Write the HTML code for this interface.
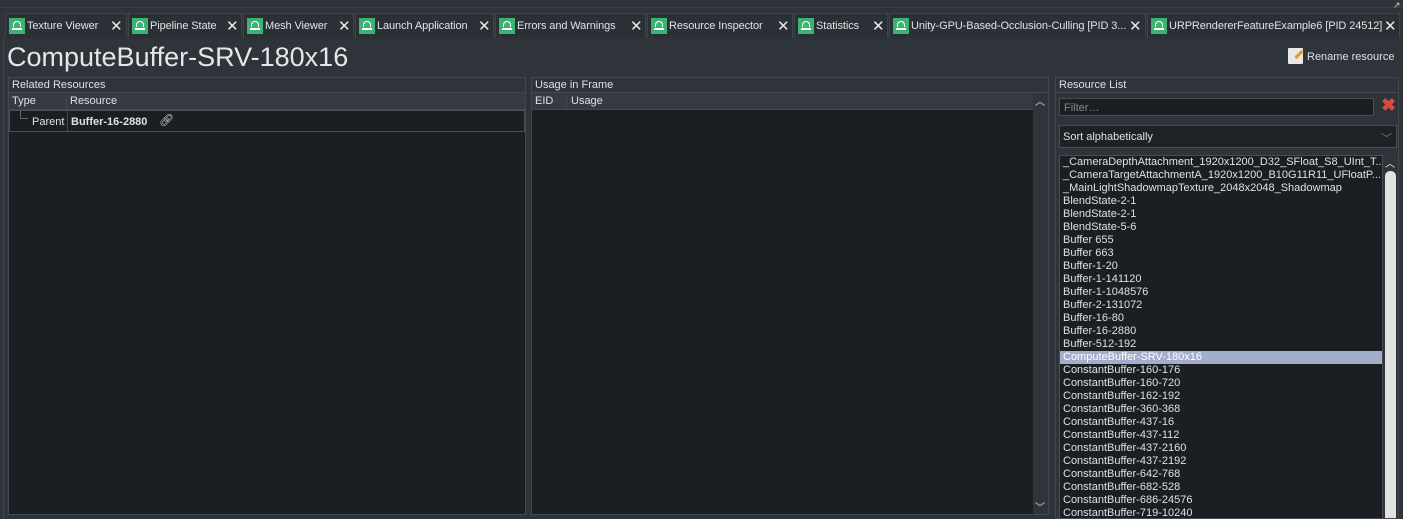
<!DOCTYPE html>
<html><head><meta charset="utf-8"><style>
*{margin:0;padding:0;box-sizing:border-box}
html,body{width:1403px;height:519px;overflow:hidden}
body{background:#2e3439;font-family:"Liberation Sans",sans-serif;font-size:11px;color:#dde1e4;position:relative}
.abs{position:absolute}
.tab{position:absolute;top:13px;height:25px;background:#2a3035;border:1px solid #3d444a;border-bottom:none;white-space:nowrap;overflow:hidden}
.tab .ic{position:absolute;left:3px;top:4px;width:16px;height:16px;background:#3cb371}
.tab .ic:after{content:"";position:absolute;left:4px;top:3px;width:6px;height:5px;border:1.5px solid #fff;border-radius:4px 4px 0 0;border-bottom:none}
.tab .ic:before{content:"";position:absolute;left:3px;top:10px;width:10px;height:1.5px;background:#fff}
.tab .t{position:absolute;left:21px;top:6px;font-size:11px;color:#dfe3e6;letter-spacing:-0.1px}
.tab .x{position:absolute;top:3px;font-size:15px;color:#e8e8e8;background:#2a3035}
.panel{position:absolute;top:77px;bottom:4px;border:1px solid #41484e;background:#1b1f23;overflow:hidden}
.ph{height:15px;background:#2e3439;padding-left:3px;line-height:14px;border-bottom:1px solid #41484e}
.ch{height:17px;background:#353b41;line-height:16px;position:relative;border-bottom:1px solid #41484e}
.row{height:13px;line-height:13px;padding-left:3px;white-space:nowrap;overflow:hidden}
</style></head><body>
<div class="abs" style="left:0;top:0;width:1403px;height:8px;border-bottom:1px solid #3a4147"></div>
<div class="abs" style="left:1393px;top:0;color:#ccc;font-size:9px">↗</div>

<div class="tab" style="left:5px;width:122px"><div class="ic"></div><div class="t">Texture Viewer</div><div class="x" style="left:104px">✕</div></div>
<div class="tab" style="left:128px;width:114px"><div class="ic"></div><div class="t">Pipeline State</div><div class="x" style="left:97px">✕</div></div>
<div class="tab" style="left:243px;width:111px"><div class="ic"></div><div class="t">Mesh Viewer</div><div class="x" style="left:94px">✕</div></div>
<div class="tab" style="left:355px;width:139px"><div class="ic"></div><div class="t">Launch Application</div><div class="x" style="left:122px">✕</div></div>
<div class="tab" style="left:495px;width:151px"><div class="ic"></div><div class="t">Errors and Warnings</div><div class="x" style="left:134px">✕</div></div>
<div class="tab" style="left:647px;width:146px"><div class="ic"></div><div class="t">Resource Inspector</div><div class="x" style="left:129px">✕</div></div>
<div class="tab" style="left:794px;width:94px"><div class="ic"></div><div class="t">Statistics</div><div class="x" style="left:77px">✕</div></div>
<div class="tab" style="left:889px;width:257px"><div class="ic"></div><div class="t">Unity-GPU-Based-Occlusion-Culling [PID 3...</div><div class="x" style="left:239px">✕</div></div>
<div class="tab" style="left:1147px;width:253px"><div class="ic"></div><div class="t">URPRendererFeatureExample6 [PID 24512]</div><div class="x" style="left:236px">✕</div></div>

<div class="abs" style="left:3px;top:38px;width:1400px;height:481px;background:#2e3439;border-left:1px solid #3d444a"></div>
<div class="abs" style="left:7px;top:42px;font-size:27px;color:#e4e7ea">ComputeBuffer-SRV-180x16</div>
<div class="abs" style="left:1288px;top:48px;width:15px;height:16px;background:#e8e8e8;border-radius:1px"></div>
<div class="abs" style="left:1294px;top:53px;width:10px;height:3px;background:#e39a2a;transform:rotate(-45deg)"></div>
<div class="abs" style="left:1307px;top:51px;font-size:11px">Rename resource</div>

<div class="panel" style="left:8px;width:518px">
<div class="ph">Related Resources</div>
<div class="ch"><span style="padding-left:3px">Type</span><span class="abs" style="left:57px;top:0;bottom:0;border-left:1px solid #41484e;padding-left:3px">Resource</span></div>
<div style="height:22px;position:relative;border:1px solid #4a5258;background:#1b1f23">
<div class="abs" style="left:10px;top:0;width:8px;height:8px;border-left:1px solid #666;border-bottom:1px solid #666"></div>
<div class="abs" style="left:22px;top:5px">Parent</div>
<div class="abs" style="left:57px;top:0;bottom:0;border-left:1px solid #41484e"></div>
<div class="abs" style="left:61px;top:5px;font-weight:bold">Buffer-16-2880</div>
<div class="abs" style="left:149px;top:2px;color:#ccc;font-size:12px">🔗︎</div>
</div>
</div>

<div class="panel" style="left:531px;width:518px">
<div class="ph">Usage in Frame</div>
<div class="ch"><span style="padding-left:3px">EID</span><span class="abs" style="left:34px;top:0;bottom:0;border-left:1px solid #41484e;padding-left:4px">Usage</span></div>
<div class="abs" style="right:0;top:15px;width:15px;bottom:0;background:#2e3439"></div>
<div class="abs" style="right:3px;top:15px;font-size:10px">︿</div>
<div class="abs" style="right:3px;bottom:0;font-size:10px">﹀</div>
</div>

<div class="abs" style="left:1055px;top:77px;width:344px;height:442px;border:1px solid #41484e;background:#2e3439;overflow:hidden">
<div class="ph">Resource List</div>
<div class="abs" style="left:3px;top:20px;width:315px;height:18px;background:#1b1f23;border:1px solid #464d53;color:#80868b;padding:3px 4px">Filter…</div>
<div class="abs" style="left:325px;top:17px;color:#e0463c;font-size:18px;font-weight:bold">✖</div>
<div class="abs" style="left:3px;top:47px;width:338px;height:23px;background:#1e2226;border:1px solid #464d53;padding:5px 3px">Sort alphabetically<span class="abs" style="right:4px;top:4px;color:#777">﹀</span></div>
<div class="abs" style="left:3px;top:77px;width:324px;height:370px;background:#1b1f23;border:1px solid #464d53;padding-top:0">
<div class="row">_CameraDepthAttachment_1920x1200_D32_SFloat_S8_UInt_T...</div>
<div class="row">_CameraTargetAttachmentA_1920x1200_B10G11R11_UFloatP...</div>
<div class="row">_MainLightShadowmapTexture_2048x2048_Shadowmap</div>
<div class="row">BlendState-2-1</div>
<div class="row">BlendState-2-1</div>
<div class="row">BlendState-5-6</div>
<div class="row">Buffer 655</div>
<div class="row">Buffer 663</div>
<div class="row">Buffer-1-20</div>
<div class="row">Buffer-1-141120</div>
<div class="row">Buffer-1-1048576</div>
<div class="row">Buffer-2-131072</div>
<div class="row">Buffer-16-80</div>
<div class="row">Buffer-16-2880</div>
<div class="row">Buffer-512-192</div>
<div class="row" style="background:#a3aecb;color:#fff">ComputeBuffer-SRV-180x16</div>
<div class="row">ConstantBuffer-160-176</div>
<div class="row">ConstantBuffer-160-720</div>
<div class="row">ConstantBuffer-162-192</div>
<div class="row">ConstantBuffer-360-368</div>
<div class="row">ConstantBuffer-437-16</div>
<div class="row">ConstantBuffer-437-112</div>
<div class="row">ConstantBuffer-437-2160</div>
<div class="row">ConstantBuffer-437-2192</div>
<div class="row">ConstantBuffer-642-768</div>
<div class="row">ConstantBuffer-682-528</div>
<div class="row">ConstantBuffer-686-24576</div>
<div class="row">ConstantBuffer-719-10240</div>
</div>
<div class="abs" style="left:327px;top:77px;width:15px;height:370px;background:#2e3439"></div>
<div class="abs" style="left:329px;top:77px;font-size:10px;color:#eee">︿</div>
<div class="abs" style="left:329px;top:93px;width:11px;height:360px;background:#e2e2e2;border-radius:5px 5px 0 0"></div>
</div>
</body></html>
